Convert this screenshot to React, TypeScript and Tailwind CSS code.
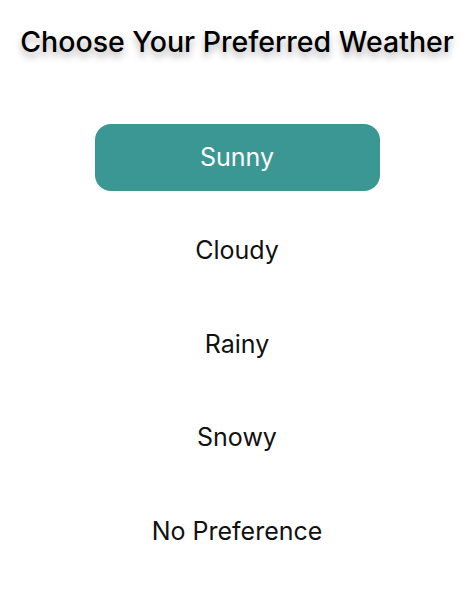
import { useState } from 'react';

const OPCIONES = ['Sunny', 'Cloudy', 'Rainy', 'Snowy', 'No Preference'];

export default function App() {
  const [elegido, setElegido] = useState('Sunny');

  return (
    <div className="min-h-screen bg-white flex flex-col items-center pt-[24px]" style={{ fontFamily: 'Inter, "Noto Sans", sans-serif' }}>
      <h1 className="text-[28.5px] leading-[36px] font-medium text-black [text-shadow:0_5px_7px_rgba(0,0,0,0.3)]">
        Choose Your Preferred Weather
      </h1>

      <div className="mt-[64px] flex flex-col items-center gap-[26.5px]">
        {OPCIONES.map((op) => (
          <button
            key={op}
            onClick={() => setElegido(op)}
            className={`w-[285px] h-[67px] rounded-[16px] text-[25px] ${
              elegido === op ? 'bg-[#3a9793] text-white' : 'bg-transparent text-[#111]'
            }`}
          >
            {op}
          </button>
        ))}
      </div>
    </div>
  );
}
